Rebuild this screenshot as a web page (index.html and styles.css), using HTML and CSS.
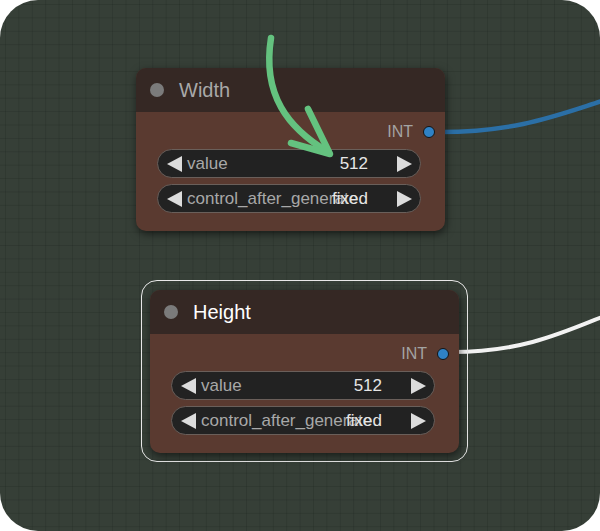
FILE: index.html
```html
<!DOCTYPE html>
<html>
<head>
<meta charset="utf-8">
<link rel="stylesheet" href="styles.css">
</head>
<body>
<div class="canvas">
  <svg class="links" width="600" height="531" viewBox="0 0 600 531">
    <path class="link-blue" d="M 440 132 C 515 132, 555 116, 602 101"/>
    <path class="link-white" d="M 452 352 C 520 352, 560 334, 602 317"/>
  </svg>

  <div class="node node-width">
    <div class="node-title">
      <span class="title-dot"></span>
      <span class="title-text">Width</span>
    </div>
    <div class="node-body">
      <div class="output-row"><span class="output-label">INT</span><span class="output-dot"></span></div>
      <div class="widget">
        <svg class="tri" width="15" height="16" viewBox="0 0 15 16"><path d="M15 0 L0 8 L15 16 Z"/></svg>
        <span class="w-label">value</span>
        <span class="w-value">512</span>
        <svg class="tri tri-right" width="15" height="16" viewBox="0 0 15 16"><path d="M0 0 L15 8 L0 16 Z"/></svg>
      </div>
      <div class="widget">
        <svg class="tri" width="15" height="16" viewBox="0 0 15 16"><path d="M15 0 L0 8 L15 16 Z"/></svg>
        <span class="w-label">control_after_generate</span>
        <span class="w-value">fixed</span>
        <svg class="tri tri-right" width="15" height="16" viewBox="0 0 15 16"><path d="M0 0 L15 8 L0 16 Z"/></svg>
      </div>
    </div>
  </div>

  <div class="selection"></div>
  <div class="node node-height">
    <div class="node-title">
      <span class="title-dot"></span>
      <span class="title-text selected">Height</span>
    </div>
    <div class="node-body">
      <div class="output-row"><span class="output-label">INT</span><span class="output-dot"></span></div>
      <div class="widget">
        <svg class="tri" width="15" height="16" viewBox="0 0 15 16"><path d="M15 0 L0 8 L15 16 Z"/></svg>
        <span class="w-label">value</span>
        <span class="w-value">512</span>
        <svg class="tri tri-right" width="15" height="16" viewBox="0 0 15 16"><path d="M0 0 L15 8 L0 16 Z"/></svg>
      </div>
      <div class="widget">
        <svg class="tri" width="15" height="16" viewBox="0 0 15 16"><path d="M15 0 L0 8 L15 16 Z"/></svg>
        <span class="w-label">control_after_generate</span>
        <span class="w-value">fixed</span>
        <svg class="tri tri-right" width="15" height="16" viewBox="0 0 15 16"><path d="M0 0 L15 8 L0 16 Z"/></svg>
      </div>
    </div>
  </div>

  <svg class="pointer" width="600" height="531" viewBox="0 0 600 531">
    <path class="arrow-shaft" d="M 271 38 C 262 95, 288 128, 328 152"/>
    <path class="arrow-head" d="M 291 143 L 330 154 L 308 109"/>
  </svg>
</div>
</body>
</html>
```

FILE: styles.css
```css
* { box-sizing: border-box; }

html, body {
  margin: 0;
  padding: 0;
  background: #ffffff;
}

body {
  width: 600px;
  height: 531px;
  overflow: hidden;
  font-family: "Liberation Sans", Arial, sans-serif;
}

.canvas {
  position: relative;
  width: 600px;
  height: 531px;
  border-radius: 38px;
  overflow: hidden;
  background-color: #363f37;
  background-image:
    linear-gradient(to right, rgba(24, 30, 25, 0.2) 1px, transparent 1px),
    linear-gradient(to bottom, rgba(24, 30, 25, 0.2) 1px, transparent 1px);
  background-size: 13.4px 13.4px;
  background-position: 5px 4px;
}

.links, .pointer {
  position: absolute;
  left: 0;
  top: 0;
}

.pointer { z-index: 5; }

.link-blue {
  fill: none;
  stroke: #2b6fa6;
  stroke-width: 4.5;
}

.link-white {
  fill: none;
  stroke: #f2f2f2;
  stroke-width: 4;
}

.arrow-shaft, .arrow-head {
  fill: none;
  stroke: #64c27f;
  stroke-width: 6.5;
  stroke-linecap: round;
  stroke-linejoin: round;
}

.node {
  position: absolute;
  width: 309px;
  height: 163px;
  border-radius: 10px;
  overflow: hidden;
  background: #5a3a30;
  box-shadow: 1px 3px 8px rgba(0, 0, 0, 0.55);
  display: flex;
  flex-direction: column;
  z-index: 2;
}

.node-width { left: 136px; top: 68px; }
.node-height { left: 150px; top: 290px; }

.selection {
  position: absolute;
  left: 141px;
  top: 280px;
  width: 327px;
  height: 182px;
  border: 1.5px solid #e8e8e8;
  border-radius: 16px;
  z-index: 1;
}

.node-title {
  height: 44px;
  background: #352824;
  display: flex;
  align-items: center;
  padding-left: 14px;
}

.title-dot {
  width: 14px;
  height: 14px;
  border-radius: 50%;
  background: #7b7b7b;
}

.title-text {
  margin-left: 15px;
  font-size: 20px;
  color: #a9a9a9;
}

.title-text.selected { color: #ffffff; }

.node-body {
  flex: 1;
  padding: 10px 24px 0 21px;
  display: flex;
  flex-direction: column;
}

.output-row {
  height: 20px;
  display: flex;
  justify-content: flex-end;
  align-items: center;
  margin-right: -14px;
}

.output-label {
  font-size: 16px;
  color: #a3a3a3;
}

.output-dot {
  width: 12px;
  height: 12px;
  border-radius: 50%;
  background: #2f82c6;
  border: 1.5px solid #141414;
  margin-left: 10px;
}

.widget {
  height: 29px;
  margin-top: 7px;
  border-radius: 15px;
  background: #222222;
  border: 1px solid #6a5f5a;
  display: flex;
  align-items: center;
  padding: 0 8px 0 9px;
}

.widget + .widget { margin-top: 6px; }

.tri { flex: none; fill: #dcdcdc; }

.w-label {
  flex: 1 1 0;
  min-width: 0;
  white-space: nowrap;
  margin-left: 5px;
  font-size: 17px;
  color: #a8a8a8;
}

.w-value {
  font-size: 17px;
  color: #e6e6e6;
  white-space: nowrap;
}

.tri-right { margin-left: 29px; }
```
